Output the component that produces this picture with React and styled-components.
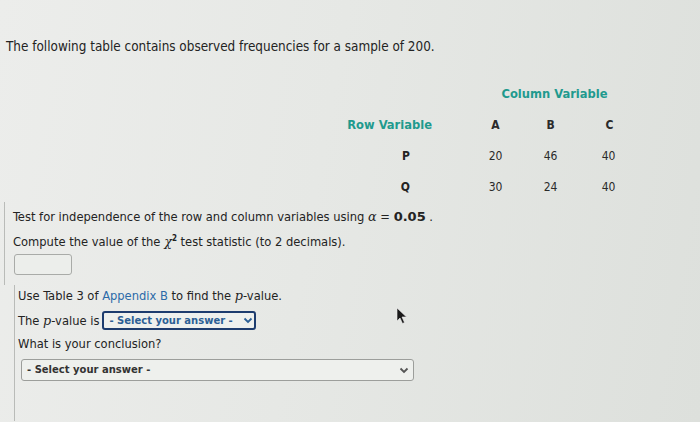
import React from 'react';
import styled, { createGlobalStyle } from 'styled-components';

const GlobalStyle = createGlobalStyle`
  html, body {
    margin: 0;
    padding: 0;
  }
  body {
    width: 700px;
    height: 422px;
    overflow: hidden;
    background: linear-gradient(100deg, #ecedeb 0%, #e6e8e5 45%, #dde0dc 100%);
    font-family: "DejaVu Sans Condensed", "DejaVu Sans", sans-serif;
    color: #232323;
  }
`;

const Page = styled.div`
  position: relative;
  width: 700px;
  height: 422px;
  padding-top: 38px;
  box-sizing: border-box;
`;

const Intro = styled.p`
  margin: 0 0 0 6px;
  font-size: 13.4px;
  line-height: 18px;
`;

const Table = styled.div`
  display: grid;
  grid-template-columns: 128px 55px 55px 55px;
  grid-auto-rows: 31px;
  align-items: center;
  margin: 22px 0 0 340px;
  font-size: 12px;
`;

const GroupHead = styled.div`
  grid-column: 2 / span 3;
  text-align: center;
  font-weight: bold;
  font-size: 12.8px;
  color: #1f9a8e;
  padding-left: 8px;
`;

const RowHead = styled.div`
  text-align: right;
  font-weight: bold;
  padding-right: ${(p) => p.$pad}px;
  color: ${(p) => (p.$teal ? '#1f9a8e' : '#232323')};
  font-size: ${(p) => (p.$teal ? '12.8px' : '12px')};
`;

const Cell = styled.div`
  text-align: center;
  font-weight: ${(p) => (p.$bold ? 'bold' : 'normal')};
  color: #2a2a2a;
  padding-left: ${(p) => p.$shift || 0}px;
`;

const Section = styled.div`
  margin: 0 0 0 ${(p) => p.$indent}px;
  padding: ${(p) => p.$pad};
  border-left: 1px solid #b9bbb8;
  font-size: 12.8px;
  line-height: 18px;
`;

const Line = styled.div`
  margin-bottom: ${(p) => p.$mb || 7}px;
`;

const Math = styled.span`
  font-family: "DejaVu Serif", "Liberation Serif", serif;
  font-style: italic;
`;

const MathNum = styled.span`
  font-family: "DejaVu Sans", sans-serif;
  font-weight: bold;
  font-size: 13px;
`;

const Sup = styled.sup`
  font-size: 8px;
  font-weight: bold;
  line-height: 0;
`;

const AnswerBox = styled.div`
  width: 56px;
  height: 19px;
  margin: -4px 0 0 1px;
  border: 1px solid #a9aba8;
  border-radius: 3px;
  background: #eceeeb;
`;

const Link = styled.span`
  color: #2c6aa8;
`;

const InlineRow = styled.div`
  display: flex;
  align-items: center;
  gap: 3px;
  margin-bottom: 5px;
`;

const Select = styled.div`
  display: flex;
  align-items: center;
  justify-content: space-between;
  box-sizing: border-box;
  width: ${(p) => p.$w}px;
  height: ${(p) => p.$h}px;
  margin-left: ${(p) => p.$ml || 0}px;
  padding: 0 ${(p) => (p.$active ? 1 : 4)}px 0 5px;
  border: ${(p) => (p.$active ? '2px solid #1d3c6e' : '1px solid #9c9e9b')};
  border-radius: 3px;
  background: #eef0ed;
  font-family: "DejaVu Sans", sans-serif;
  font-size: 10px;
  font-weight: bold;
  color: ${(p) => (p.$active ? '#2b5f95' : '#333')};
`;

const Chevron = ({ color }) => (
  <svg width="10" height="7" viewBox="0 0 10 7">
    <path d="M1.5 1.5 L5 5 L8.5 1.5" fill="none" stroke={color} strokeWidth="1.8" />
  </svg>
);

const Cursor = styled.svg`
  position: absolute;
  left: 396px;
  top: 307px;
`;

export default function App() {
  return (
    <Page>
      <GlobalStyle />
      <Intro>The following table contains observed frequencies for a sample of 200.</Intro>

      <Table>
        <div />
        <GroupHead>Column Variable</GroupHead>

        <RowHead $teal $pad={36}>Row Variable</RowHead>
        <Cell $bold>A</Cell>
        <Cell $bold>B</Cell>
        <Cell $bold $shift={8}>C</Cell>

        <RowHead $pad={58}>P</RowHead>
        <Cell>20</Cell>
        <Cell>46</Cell>
        <Cell $shift={6}>40</Cell>

        <RowHead $pad={58}>Q</RowHead>
        <Cell>30</Cell>
        <Cell>24</Cell>
        <Cell $shift={6}>40</Cell>
      </Table>

      <Section $indent={4} $pad="6px 0 10px 8px">
        <Line>
          Test for independence of the row and column variables using <Math>α</Math> = <MathNum>0.05</MathNum> .
        </Line>
        <Line $mb={0}>
          Compute the value of the <Math>χ</Math><Sup>2</Sup> test statistic (to 2 decimals).
        </Line>
        <AnswerBox />
      </Section>

      <Section $indent={14} $pad="2px 0 40px 3px">
        <Line $mb={6}>
          Use Table 3 of <Link>Appendix B</Link> to find the <Math>p</Math>-value.
        </Line>
        <InlineRow>
          <span>
            The <Math>p</Math>-value is
          </span>
          <Select $active $w={154} $h={19}>
            <span>- Select your answer -</span>
            <Chevron color="#2b5f95" />
          </Select>
        </InlineRow>
        <Line $mb={6}>What is your conclusion?</Line>
        <Select $w={393} $h={22} $ml={3}>
          <span>- Select your answer -</span>
          <Chevron color="#555" />
        </Select>
      </Section>

      <Cursor width="12" height="18" viewBox="0 0 12 18">
        <path d="M1 1 L1 14 L4 11 L6.5 16.5 L8.5 15.5 L6 10 L10.5 10 Z" fill="#1a1a1a" stroke="#eee" strokeWidth="0.6" />
      </Cursor>
    </Page>
  );
}
